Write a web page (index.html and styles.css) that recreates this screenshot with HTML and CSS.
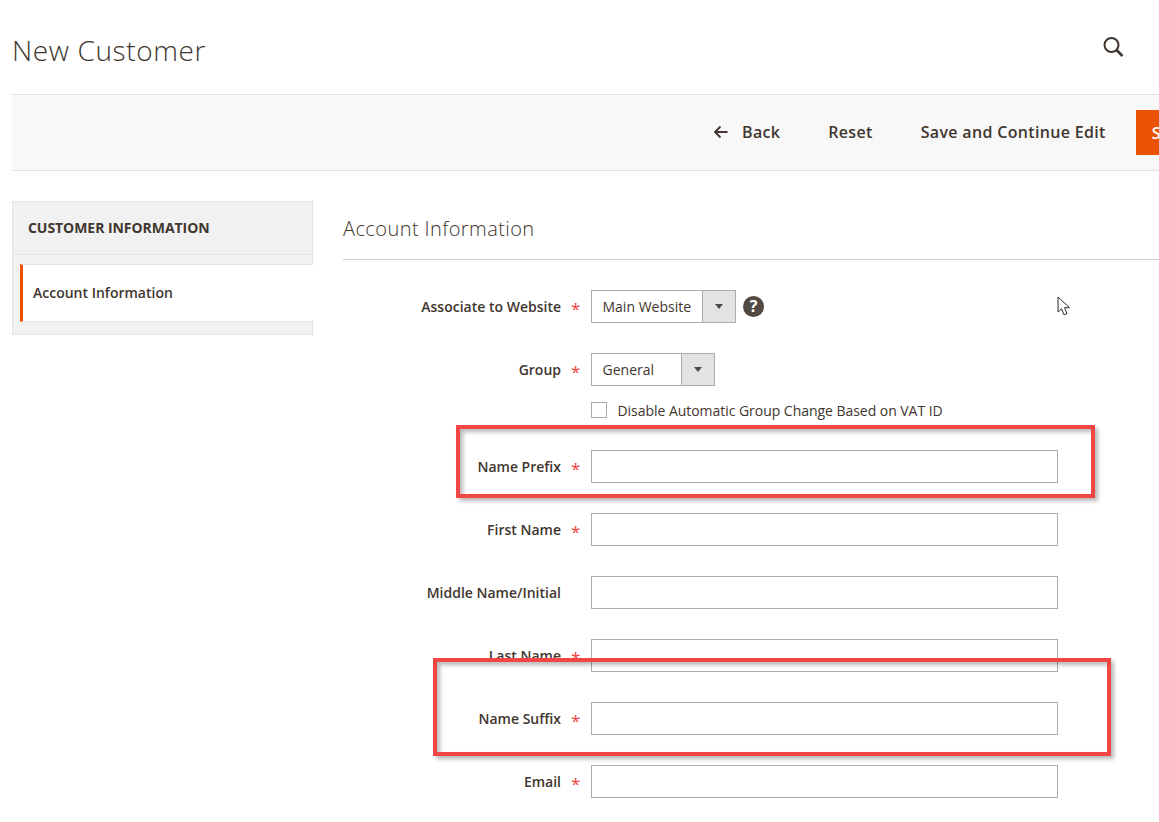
FILE: index.html
```html
<!DOCTYPE html>
<html lang="en">
<head>
    <meta charset="UTF-8">
    <meta name="viewport" content="width=device-width, initial-scale=1.0">
    <title>New Customer</title>
    <link rel="stylesheet" href="styles.css">
</head>
<body>
    <header class="page-header">
        <h1>New Customer</h1>
        <svg class="search-icon" width="24" height="24" viewBox="0 0 24 24" aria-hidden="true">
            <circle cx="10.5" cy="10" r="7" fill="none" stroke="#41362f" stroke-width="2"/>
            <path d="M15.5 15l6 6" fill="none" stroke="#41362f" stroke-width="2.6"/>
        </svg>
    </header>

    <div class="toolbar">
        <a class="tool-link back-link">
            <svg width="16" height="14" viewBox="0 0 16 14" aria-hidden="true">
                <path d="M14.5 7H2M7.5 1.5L2 7l5.500 5.500" fill="none" stroke="#41362f" stroke-width="1.800"/>
            </svg>
            Back
        </a>
        <a class="tool-link">Reset</a>
        <a class="tool-link">Save and Continue Edit</a>
        <button class="save-btn">Save</button>
    </div>

    <div class="columns">
        <aside class="sidebar">
            <div class="side-title">CUSTOMER INFORMATION</div>
            <div class="side-item">Account Information</div>
        </aside>

        <main class="content">
            <h2>Account Information</h2>

            <div class="row">
                <label>Associate to Website</label>
                <span class="star">*</span>
                <div class="select">
                    <span class="select-value">Main Website</span>
                    <span class="select-arrow"></span>
                </div>
                <span class="help">?</span>
            </div>

            <div class="row row-check">
                <label>Group</label>
                <span class="star">*</span>
                <div class="select">
                    <span class="select-value group-value">General</span>
                    <span class="select-arrow"></span>
                </div>
            </div>
            <div class="check-line">
                <span class="checkbox"></span>
                <span>Disable Automatic Group Change Based on VAT ID</span>
            </div>

            <div class="row">
                <label>Name Prefix</label>
                <span class="star">*</span>
                <input class="text-input" type="text">
            </div>
            <div class="row">
                <label>First Name</label>
                <span class="star">*</span>
                <input class="text-input" type="text">
            </div>
            <div class="row">
                <label>Middle Name/Initial</label>
                <span class="star"></span>
                <input class="text-input" type="text">
            </div>
            <div class="row">
                <label>Last Name</label>
                <span class="star">*</span>
                <input class="text-input" type="text">
            </div>
            <div class="row">
                <label>Name Suffix</label>
                <span class="star">*</span>
                <input class="text-input" type="text">
            </div>
            <div class="row">
                <label>Email</label>
                <span class="star">*</span>
                <input class="text-input" type="text">
            </div>
        </main>
    </div>

    <!-- red boxes drawn over the screenshot, the patch hides the lower half of Last Name -->
    <div class="label-patch"></div>
    <div class="callout callout-prefix"></div>
    <div class="callout callout-suffix"></div>

    <svg class="cursor" width="14" height="21" viewBox="0 0 14 21" aria-hidden="true">
        <path d="M1 1v15l3.500-3.200 2.500 6 3-1.300-2.500-5.800H12.500z" fill="#fff" stroke="#2b2b33" stroke-width="1"/>
    </svg>
</body>
</html>
```

FILE: styles.css
```css
*{
    margin: 0;
    padding: 0;
    box-sizing: border-box;
}
html, body{
    height: 100%;
    overflow: hidden;
}
body{
    position: relative;
    background-color: #fff;
    color: #41362f;
    font-family: "Open Sans", sans-serif;
    font-size: 14px;
    padding-left: 12px;
}

.page-header{
    height: 94px;
    display: flex;
    justify-content: space-between;
    padding-top: 29px;
}
h1{
    font-size: 28px;
    font-weight: 300;
    line-height: 42px;
    letter-spacing: .6px;
}
.search-icon{
    margin: 6px 34px 0 0;
}

.toolbar{
    height: 77px;
    width: 1200px;
    display: flex;
    align-items: center;
    padding-left: 701px;
    background-color: #f8f8f8;
    border-top: 1px solid #e3e3e3;
    border-bottom: 1px solid #e3e3e3;
}
.tool-link{
    font-size: 16px;
    font-weight: 600;
    letter-spacing: .33px;
    line-height: 20px;
    margin-right: 48px;
    margin-bottom: 2px;
    white-space: nowrap;
}
.back-link{
    display: flex;
    align-items: center;
    gap: 13px;
}
.tool-link:nth-child(3){
    margin-right: 30px;
}
.save-btn{
    flex-shrink: 0;
    height: 45px;
    padding: 0 16px;
    border: 0;
    background-color: #eb5202;
    color: #fff;
    font-family: inherit;
    font-size: 16px;
    font-weight: 600;
    white-space: nowrap;
}

.columns{
    display: flex;
    gap: 30px;
    margin-top: 30px;
}
.sidebar{
    width: 301px;
    flex-shrink: 0;
    height: 134px;
    padding-bottom: 12px;
    background-color: #f1f1f1;
    border: 1px solid #e3e3e3;
}
.side-title{
    height: 53px;
    padding: 0 15px;
    line-height: 52px;
    font-size: 14px;
    font-weight: 700;
    letter-spacing: -.05px;
    border-bottom: 1px solid #e3e3e3;
}
.side-item{
    height: 58px;
    margin: 9px -1px 0 7px;
    padding-left: 10px;
    line-height: 56px;
    font-size: 14px;
    font-weight: 600;
    background-color: #fff;
    border-left: 3px solid #eb5202;
    border-top: 1px solid #e3e3e3;
    border-bottom: 1px solid #e3e3e3;
}

.content{
    flex: 1;
    min-width: 0;
}
h2{
    height: 59px;
    font-size: 20px;
    font-weight: 300;
    line-height: 55px;
    letter-spacing: .42px;
    border-bottom: 1px solid #cccccc;
    margin-bottom: 30px;
}
.row{
    display: flex;
    align-items: center;
    height: 33px;
    margin-bottom: 30px;
}
.row label{
    width: 218px;
    text-align: right;
    font-weight: 600;
    white-space: nowrap;
}
.star{
    width: 30px;
    height: 33px;
    padding: 2px 0 0 10px;
    color: #ef4040;
    font-size: 17px;
    line-height: 33px;
}
.select{
    display: flex;
    height: 33px;
    background-color: #fff;
    border: 1px solid #adadad;
}
.select-value{
    padding: 0 11px 0 10.5px;
    line-height: 31px;
    white-space: nowrap;
}
.group-value{
    width: 89px;
}
.select-arrow{
    position: relative;
    width: 33px;
    background-color: #e3e3e3;
    border-left: 1px solid #adadad;
}
.select-arrow::after{
    content: "";
    position: absolute;
    left: 12px;
    top: 13px;
    border-left: 4px solid transparent;
    border-right: 4px solid transparent;
    border-top: 5px solid #514943;
}
.help{
    width: 21px;
    height: 21px;
    margin-left: 7px;
    border-radius: 50%;
    background-color: #514943;
    color: #fff;
    text-align: center;
    font-size: 16px;
    font-weight: 700;
    line-height: 21px;
}
.row-check{
    margin-bottom: 16px;
}
.check-line{
    display: flex;
    align-items: center;
    height: 16px;
    margin: 0 0 32px 248px;
    gap: 10.5px;
    letter-spacing: -.04px;
}
.checkbox{
    width: 16px;
    height: 16px;
    border: 1px solid #adadad;
    background-color: #fff;
}
.text-input{
    width: 467px;
    height: 33px;
    border: 1px solid #adadad;
    background-color: #fff;
}

.label-patch{
    position: absolute;
    left: 433px;
    top: 660px;
    width: 157px;
    height: 20px;
    background-color: #fff;
}
.callout{
    position: absolute;
    border: 4px solid #f24646;
    box-shadow: 3px 3px 4px rgba(0, 0, 0, .28), inset 3px 3px 4px rgba(0, 0, 0, .28);
}
.callout-prefix{
    left: 456px;
    top: 425px;
    width: 639px;
    height: 73px;
}
.callout-suffix{
    left: 433px;
    top: 658px;
    width: 678px;
    height: 98px;
}
.cursor{
    position: absolute;
    left: 1057px;
    top: 296px;
}
```
